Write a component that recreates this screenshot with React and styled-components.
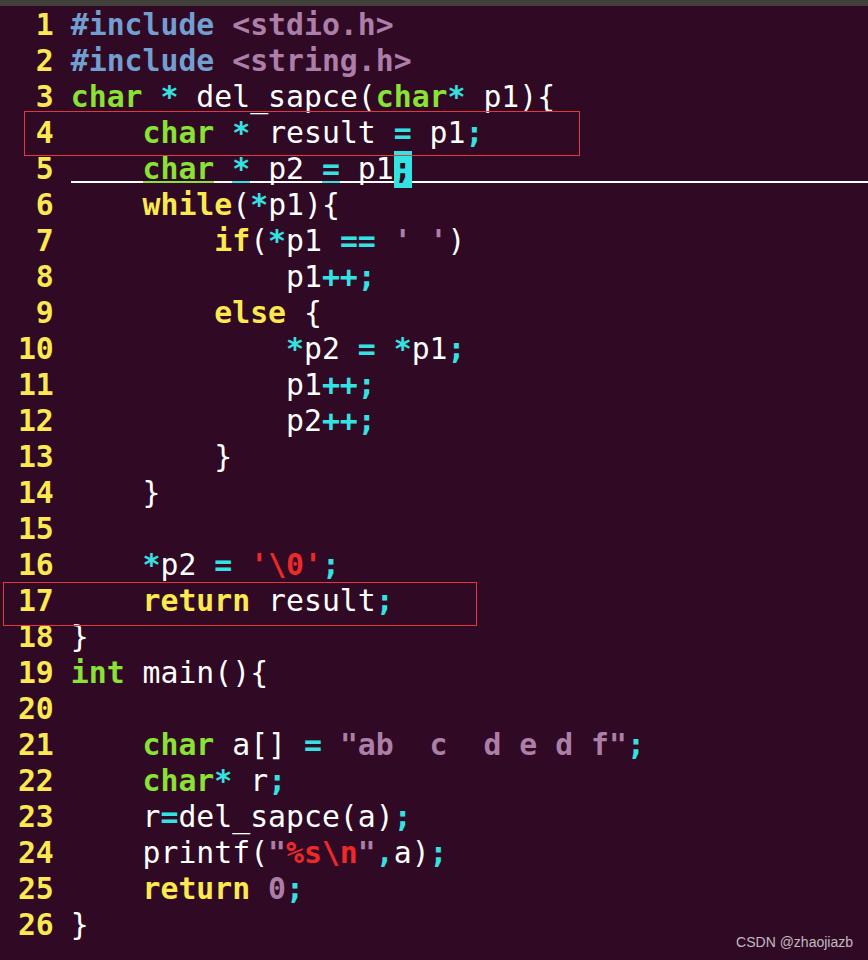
import React from "react";
import styled, { createGlobalStyle } from "styled-components";

const GlobalStyle = createGlobalStyle`
  html, body {
    margin: 0;
    padding: 0;
    background: #300a24;
  }
`;

const Screen = styled.div`
  position: relative;
  width: 868px;
  height: 960px;
  overflow: hidden;
  background: #300a24;
`;

const TopBar = styled.div`
  height: 6px;
  background: #41403b;
  margin-bottom: 1px;
`;

const Editor = styled.div`
  font-family: "DejaVu Sans Mono", monospace;
  font-size: 29.8px;
  line-height: 36px;
  white-space: pre;
  color: #ffffff;
`;

const Row = styled.div`
  display: flex;
  height: 36px;
`;

const Num = styled.span`
  width: 3ch;
  margin-right: 1ch;
  text-align: right;
  font-weight: bold;
  color: #fce94f;
`;

const Code = styled.span`
  flex: 1;
  margin-left: -1px;
  background: ${(p) =>
    p.$cursor
      ? "linear-gradient(#ffffff, #ffffff) 0 30px / 100% 2px no-repeat"
      : "none"};
`;

const colors = {
  n: "#ffffff",
  t: "#8ae234",
  k: "#fce94f",
  p: "#729fcf",
  s: "#ad7fa8",
  e: "#ef2929",
  o: "#34e2e2",
  c: "#300a24",
};

const Token = styled.span`
  color: ${(p) => colors[p.$kind]};
  font-weight: ${(p) => (p.$kind === "n" ? "normal" : "bold")};
  ${(p) =>
    p.$cursor &&
    `
    display: inline-block;
    height: 36px;
    vertical-align: top;
    background: linear-gradient(currentColor, currentColor) 0 30px / 100% 2px no-repeat;
  `}
  ${(p) =>
    p.$kind === "c" &&
    `
    display: inline-block;
    height: 37px;
    vertical-align: top;
    background: #34e2e2;
  `}
`;

const Mark = styled.div`
  position: absolute;
  border: 1px solid #e2383d;
  box-sizing: border-box;
`;

const Watermark = styled.div`
  position: absolute;
  right: 15px;
  bottom: 10px;
  font-family: "Liberation Sans", Arial, sans-serif;
  font-size: 14px;
  color: rgba(255, 255, 255, 0.72);
`;

const lines = [
  [["p", "#include"], ["n", " "], ["s", "<stdio.h>"]],
  [["p", "#include"], ["n", " "], ["s", "<string.h>"]],
  [["t", "char"], ["n", " "], ["o", "*"], ["n", " del_sapce("], ["t", "char"], ["o", "*"], ["n", " p1){"]],
  [["n", "    "], ["t", "char"], ["n", " "], ["o", "*"], ["n", " result "], ["o", "="], ["n", " p1"], ["o", ";"]],
  [["n", "    "], ["t", "char"], ["n", " "], ["o", "*"], ["n", " p2 "], ["o", "="], ["n", " p1"], ["c", ";"]],
  [["n", "    "], ["k", "while"], ["n", "("], ["o", "*"], ["n", "p1){"]],
  [["n", "        "], ["k", "if"], ["n", "("], ["o", "*"], ["n", "p1 "], ["o", "=="], ["n", " "], ["s", "' '"], ["n", ")"]],
  [["n", "            p1"], ["o", "++;"]],
  [["n", "        "], ["k", "else"], ["n", " {"]],
  [["n", "            "], ["o", "*"], ["n", "p2 "], ["o", "="], ["n", " "], ["o", "*"], ["n", "p1"], ["o", ";"]],
  [["n", "            p1"], ["o", "++;"]],
  [["n", "            p2"], ["o", "++;"]],
  [["n", "        }"]],
  [["n", "    }"]],
  [],
  [["n", "    "], ["o", "*"], ["n", "p2 "], ["o", "="], ["n", " "], ["e", "'\\0'"], ["o", ";"]],
  [["n", "    "], ["k", "return"], ["n", " result"], ["o", ";"]],
  [["n", "}"]],
  [["t", "int"], ["n", " main(){"]],
  [],
  [["n", "    "], ["t", "char"], ["n", " a[] "], ["o", "="], ["n", " "], ["s", '"ab  c  d e d f"'], ["o", ";"]],
  [["n", "    "], ["t", "char"], ["o", "*"], ["n", " r"], ["o", ";"]],
  [["n", "    r"], ["o", "="], ["n", "del_sapce(a)"], ["o", ";"]],
  [["n", "    printf("], ["s", '"'], ["e", "%s\\n"], ["s", '"'], ["o", ","], ["n", "a)"], ["o", ";"]],
  [["n", "    "], ["k", "return"], ["n", " "], ["s", "0"], ["o", ";"]],
  [["n", "}"]],
];

const CURSOR_LINE = 4;

const App = () => (
  <Screen>
    <GlobalStyle />
    <TopBar />
    <Editor>
      {lines.map((tokens, i) => (
        <Row key={i}>
          <Num>{i + 1}</Num>
          <Code $cursor={i === CURSOR_LINE}>
            {tokens.map(([kind, text], j) => (
              <Token key={j} $kind={kind} $cursor={i === CURSOR_LINE}>
                {text}
              </Token>
            ))}
          </Code>
        </Row>
      ))}
    </Editor>
    {/* red annotation boxes drawn over the screenshot */}
    <Mark style={{ left: 24, top: 111, width: 556, height: 45 }} />
    <Mark style={{ left: 3, top: 582, width: 474, height: 44 }} />
    <Watermark>CSDN @zhaojiazb</Watermark>
  </Screen>
);

export default App;
